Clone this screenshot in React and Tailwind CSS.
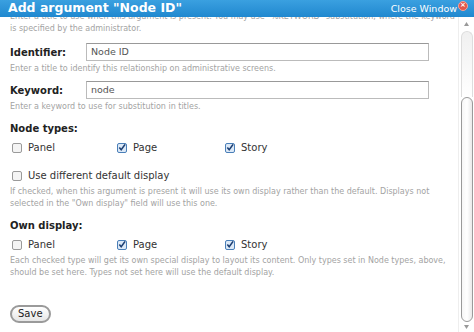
export default function App() {
    const font = { fontFamily: '"DejaVu Sans", Verdana, sans-serif' };

    const Box = ({ checked }) => (
        <span
            className={`inline-flex items-center justify-center w-[10px] h-[10px] rounded-[2px] border ${
                checked
                    ? "border-[#4a7fb8] bg-[#dce9f7]"
                    : "border-[#9a9a9a] bg-[#f4f4f4]"
            }`}
        >
            {checked && (
                <svg width="9" height="9" viewBox="0 0 9 9">
                    <path
                        d="M1.5 4.5 L3.6 7 L8 1"
                        fill="none"
                        stroke="#1d3f73"
                        strokeWidth="1.8"
                    />
                </svg>
            )}
        </span>
    );

    const Check = ({ label, checked, className = "" }) => (
        <div className={`flex items-center gap-[6px] ${className}`}>
            <Box checked={checked} />
            <span className="text-[10px] text-[#333]">{label}</span>
        </div>
    );

    const help = "text-[8px] leading-[12px] text-[#a3a3a3] whitespace-nowrap";

    return (
        <div
            className="w-[474px] h-[332px] overflow-hidden bg-white flex flex-col"
            style={font}
        >
            <div className="h-[17px] shrink-0 bg-gradient-to-b from-[#3aa0e0] to-[#1f88cf] flex items-center justify-between pl-[8px] pr-[6px] relative z-10">
                <span className="text-white font-bold text-[12.5px] leading-none">
                    Add argument "Node ID"
                </span>
                <div className="flex items-center gap-[1px]">
                    <span className="text-white text-[9.5px] leading-none">
                        Close Window
                    </span>
                    <span className="w-[10px] h-[10px] -mt-[6px] rounded-full bg-[#e2574c] border border-[#f4a39b] flex items-center justify-center text-white text-[7px] leading-none font-bold">
                        ×
                    </span>
                </div>
            </div>
            <div className="flex flex-1 min-h-0">
                <div className="flex-1 overflow-hidden pl-[10px] pr-[14px]">
                    <p className={`-mt-[6px] ${help}`}>
                        Enter a title to use when this argument is present. You may use "%KEYWORD" substitution, where the keyword
                        <br />
                        is specified by the administrator.
                    </p>
                    <div className="mt-[8px] flex items-center">
                        <span className="w-[76px] font-bold text-[10px] text-[#222]">
                            Identifier:
                        </span>
                        <div className="w-[343px] h-[18px] border border-[#bbb] border-t-[#999] flex items-center px-[4px] text-[9.5px] text-[#555]">
                            Node ID
                        </div>
                    </div>
                    <p className={`mt-[2px] ${help}`}>
                        Enter a title to identify this relationship on administrative screens.
                    </p>
                    <div className="mt-[6px] flex items-center">
                        <span className="w-[76px] font-bold text-[10px] text-[#222]">
                            Keyword:
                        </span>
                        <div className="w-[343px] h-[18px] border border-[#bbb] border-t-[#999] flex items-center px-[4px] text-[9.5px] text-[#555]">
                            node
                        </div>
                    </div>
                    <p className={`mt-[2px] ${help}`}>
                        Enter a keyword to use for substitution in titles.
                    </p>
                    <div className="mt-[8px] font-bold text-[10px] text-[#222]">
                        Node types:
                    </div>
                    <div className="mt-[4px] flex pl-[2px]">
                        <Check label="Panel" className="w-[105px]" />
                        <Check label="Page" checked className="w-[108px]" />
                        <Check label="Story" checked />
                    </div>
                    <Check
                        label="Use different default display"
                        className="mt-[13px] pl-[2px]"
                    />
                    <p className={`mt-[3px] ${help}`}>
                        If checked, when this argument is present it will use its own display rather than the default. Displays not
                        <br />
                        selected in the "Own display" field will use this one.
                    </p>
                    <div className="mt-[8px] font-bold text-[10px] text-[#222]">
                        Own display:
                    </div>
                    <div className="mt-[4px] flex pl-[2px]">
                        <Check label="Panel" className="w-[105px]" />
                        <Check label="Page" checked className="w-[108px]" />
                        <Check label="Story" checked />
                    </div>
                    <p className={`mt-[3px] ${help}`}>
                        Each checked type will get its own special display to layout its content. Only types set in Node types, above,
                        <br />
                        should be set here. Types not set here will use the default display.
                    </p>
                    <button className="mt-[26px] h-[18px] px-[6px] rounded-full border-2 border-[#9a9a9a] bg-gradient-to-b from-white to-[#e6e6e6] text-[10px] text-[#222] leading-none">
                        Save
                    </button>
                </div>
                <div className="w-[16px] shrink-0 flex flex-col items-center pt-[4px] pb-[2px] border-l border-[#eee]">
                    <svg width="7" height="6" viewBox="0 0 7 6">
                        <path d="M3.5 1 L6 5 L1 5 Z" fill="#999" />
                    </svg>
                    <div className="mt-[4px] w-[12px] h-[66px] rounded-t-full border border-b-0 border-[#ddd] bg-gradient-to-b from-[#f0f0f0] to-white" />
                    <div className="w-[12px] flex-1 rounded-full border border-[#9a9a9a] bg-gradient-to-r from-[#f6f6f6] via-white to-[#e9e9e9]" />
                    <svg className="mt-[2px]" width="7" height="6" viewBox="0 0 7 6">
                        <path d="M1 1 L6 1 L3.5 5 Z" fill="#999" />
                    </svg>
                </div>
            </div>
        </div>
    );
}
